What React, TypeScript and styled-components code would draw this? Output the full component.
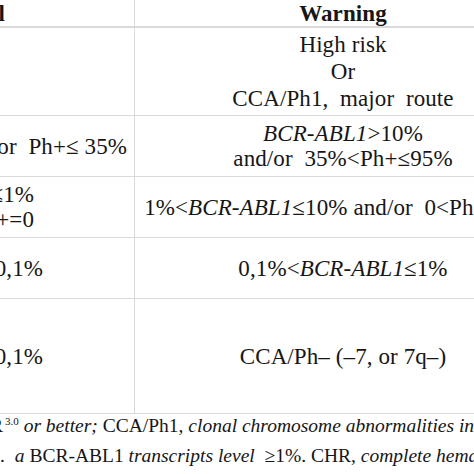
import React from 'react';
import styled, { createGlobalStyle } from 'styled-components';

const GlobalStyle = createGlobalStyle`
  html, body {
    margin: 0;
    padding: 0;
    background: #fff;
  }
  body {
    overflow: hidden;
  }
`;

const Page = styled.div`
  width: 474px;
  height: 474px;
  overflow: hidden;
  background: #fff;
  font-family: "Liberation Serif", "Times New Roman", serif;
  font-size: 23px;
  letter-spacing: 0.1px;
  color: #161616;
`;

// the table is wider than the window: the left column runs off to the left
const Table = styled.div`
  margin-left: -265px;
  width: 816px;
  display: flex;
  flex-direction: column;
`;

const Row = styled.div<{ $h: number; $head?: boolean }>`
  display: grid;
  grid-template-columns: 400px 416px;
  height: ${p => p.$h}px;
  box-sizing: border-box;
  border-bottom: ${p => (p.$head ? 2 : 1)}px solid #dadada;
`;

const LeftCell = styled.div<{ $pad: number; $bold?: boolean }>`
  border-right: 1px solid #dadada;
  display: flex;
  flex-direction: column;
  justify-content: center;
  align-items: flex-end;
  padding-right: ${p => p.$pad}px;
  line-height: 25px;
  white-space: pre;
  font-weight: ${p => (p.$bold ? 700 : 400)};
`;

const RightCell = styled.div<{ $bold?: boolean; $lh?: number }>`
  display: flex;
  flex-direction: column;
  justify-content: center;
  align-items: center;
  line-height: ${p => p.$lh ?? 25}px;
  white-space: pre;
  font-weight: ${p => (p.$bold ? 700 : 400)};
`;

const Gene = styled.i`
  font-style: italic;
`;

const Footnote = styled.div`
  margin-top: -3px;
  font-style: italic;
  font-size: 19.5px;
  letter-spacing: 0;
`;

const FootLine = styled.div<{ $ws?: number }>`
  display: flex;
  line-height: 30px;
  white-space: pre;
  word-spacing: ${p => p.$ws ?? 0}px;
`;

// the start of each footnote line is cut by the window edge
const Lead = styled.span<{ $w: number }>`
  width: ${p => p.$w}px;
  flex-shrink: 0;
  display: flex;
  justify-content: flex-end;
  font-style: normal;
`;

const Up = styled.span`
  font-style: normal;
`;

const Sup = styled.span`
  font-style: normal;
  font-size: 11px;
  line-height: 12px;
  margin-top: 4px;
  margin-left: 2px;
`;

export default function App() {
  return (
    <Page>
      <GlobalStyle />
      <Table>
        <Row $h={28} $head>
          <LeftCell $pad={129} $bold>Optimal</LeftCell>
          <RightCell $bold>Warning</RightCell>
        </Row>
        <Row $h={88}>
          <LeftCell $pad={160}>None</LeftCell>
          <RightCell $lh={27}>
            <span>High risk</span>
            <span>Or</span>
            <span>CCA/Ph1,  major  route</span>
          </RightCell>
        </Row>
        <Row $h={61}>
          <LeftCell $pad={7}>
            <span><Gene>BCR-ABL1</Gene>≤10% and/or  Ph+≤ 35%</span>
          </LeftCell>
          <RightCell>
            <span><Gene>BCR-ABL1</Gene>&gt;10%</span>
            <span>and/or  35%&lt;Ph+≤95%</span>
          </RightCell>
        </Row>
        <Row $h={61}>
          <LeftCell $pad={100}>
            <span><Gene>BCR-ABL1</Gene>≤1%</span>
            <span>and/or Ph+=0</span>
          </LeftCell>
          <RightCell>
            <span>1%&lt;<Gene>BCR-ABL1</Gene>≤10% and/or  0&lt;Ph+≤35%</span>
          </RightCell>
        </Row>
        <Row $h={61}>
          <LeftCell $pad={91}>
            <span><Gene>BCR-ABL1</Gene>≤0,1%</span>
          </LeftCell>
          <RightCell>
            <span>0,1%&lt;<Gene>BCR-ABL1</Gene>≤1%</span>
          </RightCell>
        </Row>
        <Row $h={115}>
          <LeftCell $pad={91}>
            <span><Gene>BCR-ABL1</Gene>≤0,1%</span>
          </LeftCell>
          <RightCell>
            <span>CCA/Ph– (–7, or 7q–)</span>
          </RightCell>
        </Row>
      </Table>
      <Footnote>
        <FootLine>
          <Lead $w={3}>MMR, major molecular response, MR</Lead>
          <Sup>3.0</Sup>
          <span> or better; <Up>CCA/Ph1</Up>, clonal chromosome abnormalities in Ph+ cells</span>
        </FootLine>
        <FootLine>
          <Lead $w={5}>BCR-ABL1.</Lead>
          <span>  a <Up>BCR-ABL1</Up> transcripts level  <Up>≥1%. CHR,</Up> complete hematologic response</span>
        </FootLine>
      </Footnote>
    </Page>
  );
}
